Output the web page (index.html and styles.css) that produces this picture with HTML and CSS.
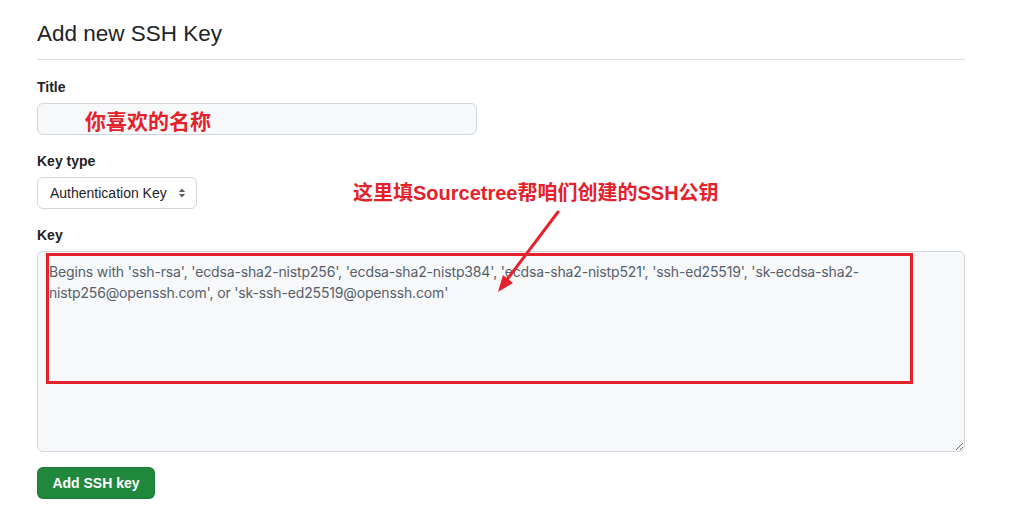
FILE: index.html
```html
<!DOCTYPE html>
<html lang="zh">
<head>
<meta charset="utf-8">
<title>Add new SSH Key</title>
<link rel="stylesheet" href="styles.css">
</head>
<body>
<div class="page">
  <div class="form">
    <h2 class="heading">Add new SSH Key</h2>
    <div class="field">
      <label class="label" for="title">Title</label>
      <input class="input" id="title" type="text">
    </div>
    <div class="field">
      <label class="label" for="type">Key type</label>
      <div class="select">
        <span>Authentication Key</span>
        <svg class="caret" width="8" height="12" viewBox="0 0 8 12"><path d="M4 1.5 7.2 5H0.8z M4 10.5 0.8 7h6.4z" fill="#57606a"/></svg>
      </div>
    </div>
    <div class="field">
      <label class="label" for="key">Key</label>
      <textarea class="textarea" id="key" placeholder="Begins with 'ssh-rsa', 'ecdsa-sha2-nistp256', 'ecdsa-sha2-nistp384', 'ecdsa-sha2-nistp521', 'ssh-ed25519', 'sk-ecdsa-sha2-nistp256@openssh.com', or 'sk-ssh-ed25519@openssh.com'"></textarea>
    </div>
    <button class="btn">Add SSH key</button>
  </div>

  <div class="note note-title">你喜欢的名称</div>
  <div class="note note-key">这里填Sourcetree帮咱们创建的SSH公钥</div>
  <div class="redbox"></div>
  <svg class="arrow" width="1025" height="528" viewBox="0 0 1025 528">
    <line x1="558" y1="212" x2="506" y2="281" stroke="#e5222b" stroke-width="3" stroke-linecap="round"/>
    <polygon points="498,292 513,283 503,275" fill="#e5222b"/>
  </svg>
</div>
</body>
</html>
```

FILE: styles.css
```css
* { box-sizing: border-box; }
html, body { margin: 0; padding: 0; background: #ffffff; }
body {
  font-family: "Liberation Sans", "Noto Sans CJK SC", sans-serif;
  color: #1f2328;
  font-size: 14px;
}
.page {
  position: relative;
  width: 1025px;
  height: 528px;
  overflow: hidden;
}
.form {
  width: 928px;
  margin-left: 37px;
  padding-top: 19px;
  display: flex;
  flex-direction: column;
  align-items: flex-start;
}
.heading {
  margin: 0;
  width: 100%;
  font-size: 22.5px;
  font-weight: 400;
  line-height: 30px;
  padding-bottom: 10px;
  border-bottom: 1px solid #d8dee4;
}
.field {
  display: flex;
  flex-direction: column;
  align-items: flex-start;
  width: 100%;
  margin-top: 16px;
}
.field:first-of-type { margin-top: 17px; }
.label {
  font-weight: 700;
  font-size: 14px;
  line-height: 21px;
  margin-bottom: 5px;
}
.input {
  width: 440px;
  height: 32px;
  border: 1px solid #d0d7de;
  border-radius: 6px;
  background: #f6f8fa;
  font: inherit;
  padding: 0 12px;
}
.select {
  width: 160px;
  height: 32px;
  border: 1px solid #d0d7de;
  border-radius: 6px;
  background: #ffffff;
  display: flex;
  align-items: center;
  justify-content: space-between;
  padding: 0 10px 0 12px;
  font-size: 14px;
  color: #1f2328;
}
.caret { display: block; }
.textarea {
  display: block;
  width: 928px;
  height: 201px;
  border: 1px solid #d0d7de;
  border-radius: 6px;
  background: #f6f8fa;
  font-family: "Inter", "Liberation Sans", sans-serif;
  font-size: 14px;
  letter-spacing: -0.15px;
  line-height: 21px;
  padding: 9px 11px;
  resize: vertical;
  color: #1f2328;
}
.textarea::placeholder { color: #57606a; opacity: 1; }
.btn {
  margin-top: 15px;
  height: 32px;
  width: 118px;
  border: 1px solid rgba(31, 35, 40, 0.15);
  border-radius: 6px;
  background: #1f883d;
  color: #ffffff;
  font-family: "Liberation Sans", sans-serif;
  font-weight: 700;
  font-size: 14px;
  padding: 0;
}
.note {
  position: absolute;
  color: #e5222b;
  font-weight: 700;
  font-size: 20px;
  line-height: 24px;
  font-family: "Liberation Sans", "Noto Sans CJK SC", sans-serif;
  white-space: nowrap;
}
.note-title { left: 85px; top: 110px; font-size: 21px; }
.note-key { left: 353px; top: 181px; }
.redbox {
  position: absolute;
  left: 46px;
  top: 253px;
  width: 867px;
  height: 131px;
  border: 3px solid #e5222b;
}
.arrow {
  position: absolute;
  left: 0;
  top: 0;
  pointer-events: none;
}
```
